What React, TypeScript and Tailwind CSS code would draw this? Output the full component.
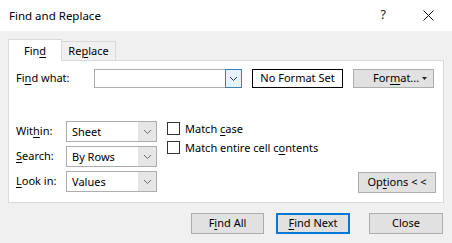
import React from "react";

const U = ({ children }: { children: React.ReactNode }) => (
  <span className="underline underline-offset-2 decoration-1">{children}</span>
);

function Chevron({ dark }: { dark?: boolean }) {
  return (
    <svg width="9" height="6" viewBox="0 0 9 6" fill="none">
      <path d="M1 1l3.5 3.5L8 1" stroke={dark ? "#333" : "#6d6d6d"} strokeWidth="1" />
    </svg>
  );
}

function Select({ value }: { value: string }) {
  return (
    <div className="flex h-[21px] w-[91px] border border-[#adadad] bg-white">
      <div className="flex-1 pl-[5px] leading-[19px]">{value}</div>
      <div className="flex w-[18px] items-center justify-center border-l border-[#e3e3e3] bg-[#e6e6e6]">
        <Chevron />
      </div>
    </div>
  );
}

function Check({ children }: { children: React.ReactNode }) {
  return (
    <div className="flex h-[13px] items-center gap-[5px]">
      <div className="h-[13px] w-[13px] border border-[#333] bg-white" />
      <span className="leading-[13px]">{children}</span>
    </div>
  );
}

function Button({ children, primary, w }: { children: React.ReactNode; primary?: boolean; w: string }) {
  return (
    <div
      className={`flex h-[21px] items-center justify-center bg-[#e1e1e1] ${w} ${
        primary ? "border-2 border-[#0078d7]" : "border border-[#adadad]"
      }`}
    >
      {children}
    </div>
  );
}

export default function App() {
  return (
    <div className="flex h-[243px] w-[452px] flex-col bg-[#f0f0f0] font-['Noto_Sans'] text-[11px] text-black">
      <div className="flex h-[31px] items-center bg-white pl-[9px] pr-[18px]">
        <span className="flex-1 text-[11.5px]">Find and Replace</span>
        <span className="mr-[37px] text-[12.5px] text-[#222]">?</span>
        <svg width="11" height="11" viewBox="0 0 11 11">
          <path d="M0.5 0.5l10 10M10.5 0.5l-10 10" stroke="#111" strokeWidth="1" />
        </svg>
      </div>

      <div className="flex flex-col px-[8px] pt-[8px]">
        <div className="flex h-[21px] items-end">
          <div className="relative z-10 -mb-px flex h-[22px] w-[54px] items-center justify-center border border-b-0 border-[#d9d9d9] bg-white pt-[2px]">
            Fin<U>d</U>
          </div>
          <div className="flex h-[19px] w-[54px] items-center justify-center border border-l-0 border-b-0 border-[#d9d9d9]">
            Re<U>p</U>lace
          </div>
        </div>

        <div className="flex h-[143px] flex-col border border-[#d9d9d9] bg-white pl-[7px] pr-[7px] pt-[8px]">
          <div className="flex items-center">
            <span className="w-[78px]">
              Fi<U>n</U>d what:
            </span>
            <div className="flex h-[19px] w-[148px] border border-[#adadad] bg-white">
              <div className="flex-1" />
              <div className="flex w-[17px] items-center justify-center border border-[#3c7fb1] bg-[#e5f1fb] -m-px">
                <Chevron dark />
              </div>
            </div>
            <div className="ml-[10px] flex h-[19px] w-[91px] items-center justify-center border border-black">
              No Format Set
            </div>
            <div className="ml-[10px] flex h-[19px] w-[81px] items-center border border-[#adadad] bg-[#e1e1e1] pl-[19px]">
              <span className="flex-1">
                For<U>m</U>at...
              </span>
              <svg width="5" height="3" viewBox="0 0 5 3" className="mr-[6px]">
                <path d="M0 0h5L2.5 3z" fill="#222" />
              </svg>
            </div>
          </div>

          <div className="mt-[33px] flex flex-1">
            <div className="flex flex-col gap-[4px]">
              <div className="flex items-center">
                <span className="w-[50px]">
                  Wit<U>h</U>in:
                </span>
                <Select value="Sheet" />
              </div>
              <div className="flex items-center">
                <span className="w-[50px]">
                  <U>S</U>earch:
                </span>
                <Select value="By Rows" />
              </div>
              <div className="flex items-center">
                <span className="w-[50px]">
                  <U>L</U>ook in:
                </span>
                <Select value="Values" />
              </div>
            </div>

            <div className="ml-[10px] mt-px flex flex-col gap-[6px]">
              <Check>
                Match <U>c</U>ase
              </Check>
              <Check>
                Match entire cell c<U>o</U>ntents
              </Check>
            </div>

            <div className="flex flex-1 items-end justify-end pb-[9px]">
              <Button w="w-[78px]">
                Op<U>t</U>ions &lt; &lt;
              </Button>
            </div>
          </div>
        </div>

        <div className="mt-[10px] flex justify-end gap-[12px] pr-px">
          <Button w="w-[73px]">
            F<U>i</U>nd All
          </Button>
          <Button w="w-[74px]" primary>
            <U>F</U>ind Next
          </Button>
          <div className="ml-[7px]">
            <Button w="w-[74px]">Close</Button>
          </div>
        </div>
      </div>
    </div>
  );
}
